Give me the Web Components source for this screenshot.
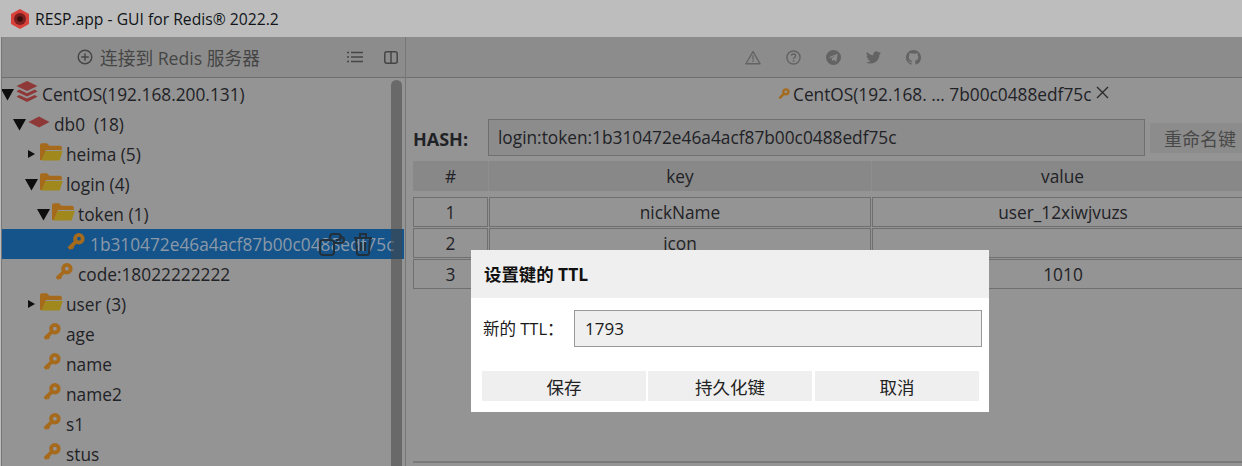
<!DOCTYPE html>
<html lang="zh-CN"><head><meta charset="utf-8"><title>RESP.app</title>
<style>
html,body{margin:0;height:100%;overflow:hidden}
body{width:1242px;height:466px;background:#949494;font:17.300px "Open Sans","Noto Sans CJK SC",sans-serif;color:#1f2226;position:relative}
app-shell{height:466px}
</style></head><body>
<app-shell>
  <title-bar slot="title">RESP.app - GUI for Redis® 2022.2</title-bar>
  <side-bar slot="side">
    <tree-row level="0" arrow="big" icon="server">CentOS(192.168.200.131)</tree-row>
    <tree-row level="1" arrow="big" icon="db">db0&nbsp; (18)</tree-row>
    <tree-row level="2" arrow="small" icon="folder">heima (5)</tree-row>
    <tree-row level="2" arrow="big" icon="folder">login (4)</tree-row>
    <tree-row level="3" arrow="big" icon="folder">token (1)</tree-row>
    <tree-row level="4" icon="key" selected>1b310472e46a4acf87b00c0488edf75c</tree-row>
    <tree-row level="3" icon="key">code:18022222222</tree-row>
    <tree-row level="2" arrow="small" icon="folder">user (3)</tree-row>
    <tree-row level="2" icon="key">age</tree-row>
    <tree-row level="2" icon="key">name</tree-row>
    <tree-row level="2" icon="key">name2</tree-row>
    <tree-row level="2" icon="key">s1</tree-row>
    <tree-row level="2" icon="key">stus</tree-row>
  </side-bar>
  <key-panel slot="main"></key-panel>
</app-shell>
<ttl-dialog></ttl-dialog>
<script>
const KEY='<svg width="18" height="18" viewBox="0 0 18 18"><g fill="none" stroke="#a66a1c"><circle cx="11.900" cy="5.700" r="3.800" stroke-width="3.800"/><path d="M9 8.600 1.800 15.600" stroke-width="3.600"/><path d="M3.200 12.400 6.200 15.400" stroke-width="3"/></g></svg>';
const ICONS={
 key:KEY,
 folder:'<svg width="23" height="18" viewBox="0 0 23 18"><path d="M0 17V2.200C0 1 .9.200 2 .200h5l2.400 2.600H20c1 0 1.800.7 1.800 1.700V7H6L2 17z" fill="#a66a1c"/><path d="M5.400 8h17.400L19.600 17.600H1.600z" fill="#a0881c"/></svg>',
 server:'<svg width="22" height="22" viewBox="0 0 22 22" fill="#8f3838"><path d="M11 0 21.500 5 11 10 .5 5z"/><path d="M3.200 8.600 11 12.200 18.800 8.600 21.500 10.400 11 15.400 .5 10.400z"/><path d="M3.200 14 11 17.600 18.800 14 21.500 15.800 11 21 .5 15.800z"/></svg>',
 db:'<svg width="22" height="12" viewBox="0 0 22 12"><path d="M11 .5 21.500 6 11 11.500 .5 6z" fill="#8f3838"/></svg>'
};
function def(name,html,init){
  customElements.define(name,class extends HTMLElement{
    constructor(){super();this.attachShadow({mode:'open'}).innerHTML=typeof html==='function'?html(this):html}
    connectedCallback(){init&&init(this)}
  });
}
def('app-shell',`<style>
:host{display:grid;grid-template-columns:406px 1fr;grid-template-rows:37px 1fr;width:1242px}
.t{grid-column:1/3}
</style><div class="t"><slot name="title"></slot></div><slot name="side"></slot><slot name="main"></slot>`);
def('title-bar',`<style>
:host{display:flex;align-items:center;height:37px;background:#bdbdbd;padding-left:11px;gap:6px;color:#101418;font:15.700px "Open Sans",sans-serif}
</style><svg width="18" height="20" viewBox="0 0 18 20"><path d="M9 0 18 5v10l-9 5-9-5V5z" fill="#d8403a"/><circle cx="9" cy="10" r="6" fill="#7a1f1f"/><circle cx="9" cy="10" r="2.800" fill="#3a0d0d"/></svg><slot></slot>`);
def('tool-btn',`<style>:host{display:inline-flex;align-items:center;justify-content:center}</style><slot></slot>`);
def('side-bar',`<style>
:host{display:flex;flex-direction:column;height:429px;border-left:1px solid #bdbdbd;border-right:1px solid #777;box-sizing:border-box;position:relative;background:#949494;overflow:hidden}
.in{border-left:1px solid #777;flex:1;display:flex;flex-direction:column;min-height:0}
.tool{flex:none;background:#8c8c8c;border-bottom:1px solid #6f6f6f;box-sizing:border-box;height:41px;display:flex;align-items:center;color:#454545;font-size:17.700px;padding-left:75px}
.cap{display:flex;align-items:center;gap:7px;width:262px;white-space:nowrap}
.end{display:flex;gap:21px;align-items:center;margin-left:8px}
.tree{padding-top:2px;margin-top:-1px;flex:1;min-height:0;overflow:hidden}
.bar{position:absolute;right:3px;top:43px;bottom:0;width:11px;background:rgba(70,70,70,.55);border-radius:6px 6px 0 0}
</style><div class="in"><div class="tool"><div class="cap"><svg width="16" height="16" viewBox="0 0 16 16" fill="none" stroke="#454545" stroke-width="1.400"><circle cx="8" cy="8" r="6.800"/><path d="M8 4.200v7.600M4.200 8h7.600"/></svg><span>连接到 Redis 服务器</span></div>
<div class="end"><tool-btn><svg width="16" height="12" viewBox="0 0 16 12" stroke="#454545" stroke-width="1.500" fill="none"><path d="M4 1.500h12M4 6h12M4 10.500h12M0 1.500h2M0 6h2M0 10.500h2"/></svg></tool-btn>
<tool-btn><svg width="14" height="13" viewBox="0 0 14 13" stroke="#454545" stroke-width="1.500" fill="none"><rect x=".8" y=".8" width="12.400" height="11.400" rx="2"/><path d="M7 1v11"/></svg></tool-btn></div></div>
<div class="tree"><slot></slot></div></div><div class="bar"></div>`);
def('tree-row',el=>{
 const lv=+el.getAttribute('level'),a=el.getAttribute('arrow'),ic=el.getAttribute('icon'),sel=el.hasAttribute('selected');
 const arrow=a==='big'?'<svg width="13" height="13" viewBox="0 0 13 13"><path d="M0 1h13L6.500 12.500z" fill="#0e0e0e"/></svg>':a==='small'?'<svg width="7" height="8" viewBox="0 0 7 8"><path d="M0 0 7 4 0 8z" fill="#0e0e0e"/></svg>':'';
 const iw=ic==='key'?23:26, iml=ic==='key'?17:a==='small'?4:1;
 return `<style>
:host{display:flex;align-items:center;height:30px;padding-left:${lv*12}px;white-space:nowrap;overflow:hidden;position:relative;${sel?'background:#15548a;color:#8b99a8;width:402px;box-sizing:border-box;':''}}
.a{width:${a==='small'?11:14}px;flex:none;display:flex;align-items:center;justify-content:${a==='small'?'flex-end':'flex-start'};margin-left:${a==='small'?'-2px':'-1px'};margin-right:${a==='small'?'1px':'0'}}
.i{flex:none;display:flex;align-items:center;width:${iw}px;margin-left:${iml}px;margin-bottom:4px}
.acts{position:absolute;left:317px;top:4px;display:flex;gap:9px;align-items:flex-start}
.t{display:block;width:${sel?'305px':'auto'};overflow:hidden;flex:none}
</style>${ic==='key'?'':`<span class="a">${arrow}</span>`}<span class="i">${ICONS[ic]}</span><span class="t"><slot></slot></span>${sel?`<span class="acts"><svg width="26" height="23" viewBox="0 0 26 23" fill="none" stroke="#22303c" stroke-width="2"><rect x="1" y="7" width="14" height="15" rx="3"/><path d="M11 5.500V4a3 3 0 0 1 3-3h5a3 3 0 0 1 0 6h-2M17 10h-3"/><path d="M20 4h2a3 3 0 0 1 0 6h-5a3 3 0 0 1-3-3"/></svg><svg width="18" height="23" viewBox="0 0 18 23" fill="none" stroke="#22303c" stroke-width="2"><path d="M0 5h18M6 4V1h6v3M2 5l1 15a2 2 0 0 0 2 2h8a2 2 0 0 0 2-2l1-15M7 9v9M11 9v9"/></svg></span>`:''}`;
});
def('key-panel',`<style>
:host{display:block;height:429px;background:#949494;position:relative;overflow:hidden}
.tool{height:41px;box-sizing:border-box;background:#8c8c8c;border-bottom:1px solid #6f6f6f;display:flex;align-items:center;gap:25px;padding-left:339px}
.tool svg{display:block;fill:#636363;flex:none}
.tab{height:32px;display:flex;align-items:center;padding-left:372px;gap:3px;white-space:nowrap}
.tab svg{flex:none}
.hash{display:flex;align-items:center;margin:9px 0 0 7px;height:37px;overflow:hidden}
.hash b{width:75px;flex:none;font-size:18px;padding-top:3px;box-sizing:border-box}
.inp{width:657px;box-sizing:border-box;height:37px;border:1px solid #6f6f6f;background:#8c8c8c;display:flex;align-items:center;padding-left:9px;flex:none}
.ren{margin-left:5px;width:100px;height:30px;background:#8c8c8c;flex:none;display:flex;align-items:center;padding-left:14px;box-sizing:border-box;font-size:18px;color:#484848;white-space:nowrap}
.hd{display:grid;margin:5px 0 0 7px;height:30px;background:#888;grid-template-columns:75px 383px 382px}
.hd>div{display:flex;align-items:center;justify-content:center}
.hd>div+div{border-left:1px solid #8f8f8f}
.rows{margin:6px 0 0 7px;display:grid;grid-template-columns:75px 382px 382px;grid-auto-rows:30px;gap:1px 1px}
.rows>div{border:1px solid #6f6f6f;box-sizing:border-box;display:flex;align-items:center;justify-content:center;height:30px}
.foot{position:absolute;left:7px;right:0;bottom:3px;border-bottom:2px solid #7a7a7a}
</style>
<div class="tool">
<svg width="16" height="15" viewBox="0 0 18 16"><path d="M9 1.300 17 15H1z" fill="none" stroke="#636363" stroke-width="1.500" stroke-linejoin="round"/><path d="M8.300 5.500h1.400v5H8.300zM8.300 11.500h1.400V13H8.300z"/></svg>
<svg width="15" height="15" viewBox="0 0 16 16"><circle cx="8" cy="8" r="7" fill="none" stroke="#636363" stroke-width="1.500"/><path d="M5.800 6.200C5.800 5 6.800 4.300 8 4.300s2.300.7 2.300 1.900c0 1.800-2.300 1.600-2.300 3.400" fill="none" stroke="#636363" stroke-width="1.500"/><rect x="7.200" y="10.700" width="1.600" height="1.600"/></svg>
<svg width="15" height="15" viewBox="0 0 16 16"><circle cx="8" cy="8" r="8"/><path d="M3 7.800 12.500 4l-1.600 8.400-3-2.100-1.500 1.500-.3-2.700 4.400-3.600-5.400 3z" fill="#8c8c8c"/></svg>
<svg width="15" height="13" viewBox="0 0 24 20"><path d="M23.953 2.570a10 10 0 01-2.825.775 4.958 4.958 0 002.163-2.723c-.951.555-2.005.959-3.127 1.184a4.920 4.920 0 00-8.384 4.482C7.690 6.095 4.067 4.130 1.640 1.162a4.822 4.822 0 00-.666 2.475c0 1.710.870 3.213 2.188 4.096a4.904 4.904 0 01-2.228-.616v.060a4.923 4.923 0 003.946 4.827 4.996 4.996 0 01-2.212.085 4.936 4.936 0 004.604 3.417 9.867 9.867 0 01-6.102 2.105c-.390 0-.779-.023-1.170-.067a13.995 13.995 0 007.557 2.209c9.053 0 13.998-7.496 13.998-13.985 0-.210 0-.420-.015-.630A9.935 9.935 0 0024 2.590z"/></svg>
<svg width="15" height="15" viewBox="0 0 16 16"><path d="M8 0C3.580 0 0 3.580 0 8c0 3.540 2.290 6.530 5.470 7.590.400.070.550-.170.550-.380 0-.190-.010-.820-.010-1.490-2.010.370-2.530-.490-2.690-.940-.090-.230-.480-.940-.820-1.130-.280-.150-.680-.520-.010-.530.630-.010 1.080.580 1.230.820.720 1.210 1.870.870 2.330.660.070-.520.280-.870.510-1.070-1.780-.200-3.640-.890-3.640-3.950 0-.870.310-1.590.820-2.150-.080-.200-.360-1.020.080-2.120 0 0 .670-.210 2.200.820.640-.180 1.320-.270 2-.270.680 0 1.360.090 2 .270 1.530-1.040 2.200-.820 2.200-.820.440 1.100.160 1.920.080 2.120.510.560.820 1.270.820 2.150 0 3.070-1.870 3.750-3.650 3.950.290.250.540.730.540 1.480 0 1.070-.010 1.930-.010 2.200 0 .210.150.460.550.380A8.013 8.013 0 0016 8c0-4.420-3.580-8-8-8z"/></svg>
</div>
<div class="tab"><svg width="12" height="12" viewBox="0 0 18 18"><g fill="none" stroke="#a66a1c"><circle cx="11.800" cy="5.800" r="3.900" stroke-width="3.400"/><path d="M9 8.600 2 15.400" stroke-width="3.600"/></g></svg><span>CentOS(192.168. ... 7b00c0488edf75c</span><svg width="13" height="13" viewBox="0 0 13 13" style="margin:0 0 3px 2px" fill="none" stroke="#2a2a2a" stroke-width="1.300"><path d="M1 1l11 11M12 1 1 12"/></svg></div>
<div class="hash"><b>HASH:</b><div class="inp">login:token:1b310472e46a4acf87b00c0488edf75c</div><div class="ren">重命名键</div></div>
<div class="hd"><div>#</div><div>key</div><div>value</div></div>
<div class="rows"><div>1</div><div>nickName</div><div>user_12xiwjvuzs</div><div>2</div><div>icon</div><div></div><div>3</div><div></div><div>1010</div></div>
<div class="foot"></div>`);
def('ttl-dialog',`<style>
:host{position:absolute;left:471px;top:250px;width:518px;height:162px;background:#fff;color:#1a1a1a;display:flex;flex-direction:column;font-size:17px}
.h{height:48px;box-sizing:border-box;padding-bottom:2px;background:#efefef;display:flex;align-items:center;padding-left:13px;font-weight:700;font-size:17.400px;color:#111}
.r{display:flex;align-items:center;margin-top:12px;height:37px;padding-left:12px}
.l{width:91px;flex:none;white-space:nowrap;font-size:16.500px;padding-bottom:2px;box-sizing:border-box}
.i{width:408px;height:37px;box-sizing:border-box;border:1px solid #999;background:#efefef;display:flex;align-items:center;padding-left:10px}
.b{display:flex;margin:24px 0 0 11px;gap:2px}
.b span{width:164px;height:30px;background:#efefef;display:flex;align-items:center;justify-content:center;font-size:17.500px;color:#222}
.b span:last-child{margin-left:1px}
</style><div class="h">设置键的 TTL</div><div class="r"><div class="l">新的 TTL：</div><div class="i">1793</div></div><div class="b"><span>保存</span><span>持久化键</span><span>取消</span></div>`);
</script>
</body></html>
